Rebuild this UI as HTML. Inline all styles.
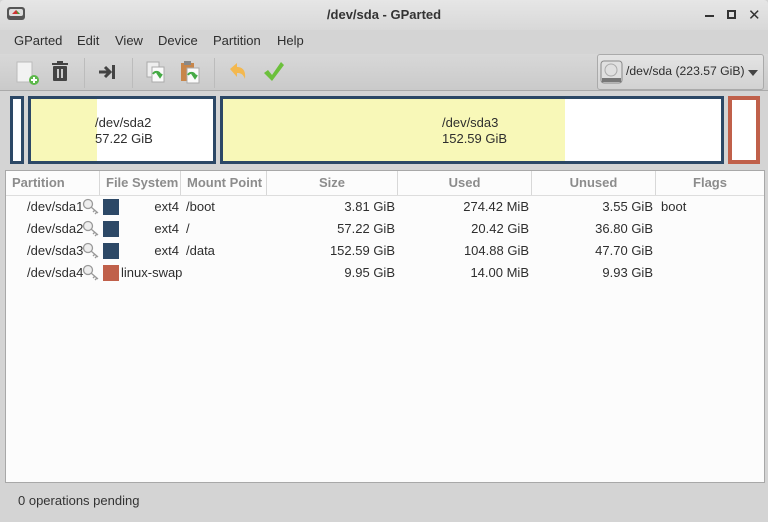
<!DOCTYPE html>
<html><head><meta charset="utf-8"><style>
*{margin:0;padding:0;box-sizing:border-box}
body{width:768px;height:522px;overflow:hidden;background:#d4d4d4;font-family:"Liberation Sans","DejaVu Sans",sans-serif;font-size:13px;color:#2e2e2e;position:relative}
.a{position:absolute;white-space:nowrap}
.r{text-align:right}
.t{line-height:22px;top:196px}
.hd{position:absolute;top:171px;height:24px;line-height:24px;color:#8c8c8c;font-weight:bold;border-right:1px solid #d8d8d8;padding-left:6px}
.sq{position:absolute;width:16px;height:16px;background:#2c4866}
</style></head><body>
<!-- title bar -->
<div class="a" style="left:0;top:0;width:768px;height:30px;background:linear-gradient(#e6e6e6,#d8d8d8);border-radius:4px 4px 0 0"></div>
<svg class="a" style="left:6px;top:5px" width="20" height="18" viewBox="0 0 20 18"><rect x="1" y="2" width="18" height="13" rx="3" fill="#555"/><rect x="3" y="4" width="14" height="7" rx="2" fill="#ddd"/><path d="M6 9 L10 5 L14 9Z" fill="#c33"/><path d="M10 5 L14 9 L12 9Z" fill="#3a3"/></svg>
<div class="a" style="left:0;width:768px;top:7px;text-align:center;font-weight:bold;font-size:13px;color:#333">/dev/sda - GParted</div>
<div class="a" style="left:705px;top:15px;width:9px;height:2px;background:#333"></div>
<div class="a" style="left:727px;top:10px;width:9px;height:9px;border:2px solid #333"></div>
<div class="a" style="left:748px;top:6px;font-weight:bold;font-size:15px;color:#333">✕</div>
<!-- menu -->
<div class="a" style="left:14px;top:33px">GParted</div>
<div class="a" style="left:77px;top:33px">Edit</div>
<div class="a" style="left:115px;top:33px">View</div>
<div class="a" style="left:158px;top:33px">Device</div>
<div class="a" style="left:213px;top:33px">Partition</div>
<div class="a" style="left:277px;top:33px">Help</div>
<!-- toolbar -->
<div class="a" style="left:0;top:54px;width:768px;height:37px;background:linear-gradient(#d8d8d8,#cacaca);border-bottom:1px solid #aaa"></div>
<div class="a" style="left:84px;top:58px;width:1px;height:30px;background:#bcbcbc"></div>
<div class="a" style="left:132px;top:58px;width:1px;height:30px;background:#bcbcbc"></div>
<div class="a" style="left:214px;top:58px;width:1px;height:30px;background:#bcbcbc"></div>
<svg class="a" style="left:14px;top:60px" width="26" height="26"><rect x="3" y="2" width="15" height="20" fill="#f2f2f2" stroke="#bbb"/><circle cx="20" cy="20" r="5" fill="#5cb84a"/><path d="M20 17v6M17 20h6" stroke="#fff" stroke-width="2"/></svg>
<svg class="a" style="left:50px;top:60px" width="22" height="24"><rect x="2" y="3" width="16" height="2" fill="#444"/><rect x="7" y="1" width="6" height="2" fill="#444"/><rect x="3" y="6" width="14" height="15" rx="1" fill="#444"/><path d="M8 9v9M12 9v9" stroke="#ccc" stroke-width="2"/></svg>
<svg class="a" style="left:97px;top:62px" width="22" height="20"><path d="M2 10h10M8 5l5 5-5 5" stroke="#444" stroke-width="3" fill="none"/><rect x="15" y="3" width="3" height="14" fill="#444"/></svg>
<svg class="a" style="left:144px;top:60px" width="24" height="26"><rect x="3" y="2" width="12" height="15" fill="#eee" stroke="#aaa"/><rect x="8" y="7" width="12" height="15" fill="#fafafa" stroke="#aaa"/><path d="M9 14a4 4 0 0 1 7 0l-2 0 2 3 2-3" stroke="#4a4" stroke-width="2" fill="none"/></svg>
<svg class="a" style="left:178px;top:60px" width="24" height="26"><rect x="3" y="3" width="13" height="18" fill="#c8864a"/><rect x="6" y="1" width="7" height="4" fill="#888"/><rect x="9" y="8" width="12" height="15" fill="#fafafa" stroke="#aaa"/><path d="M10 15a4 4 0 0 1 7 0l-2 0 2 3 2-3" stroke="#4a4" stroke-width="2" fill="none"/></svg>
<svg class="a" style="left:226px;top:60px" width="24" height="24"><path d="M4 9l7-6v4c6 0 9 4 8 12-2-5-4-6-8-6v4z" fill="#f3b84f"/></svg>
<svg class="a" style="left:261px;top:60px" width="24" height="24"><path d="M3 13l4-3 4 5 9-13 3 3-12 16z" fill="#6cc03c"/></svg>
<!-- device combo -->
<div class="a" style="left:597px;top:54px;width:167px;height:36px;border:1px solid #aaa;border-radius:3px;background:linear-gradient(#e4e4e4,#d2d2d2)"></div>
<svg class="a" style="left:600px;top:59px" width="24" height="26"><rect x="1" y="2" width="21" height="22" rx="3" fill="#e0e0e0" stroke="#888"/><circle cx="11" cy="11" r="6" fill="none" stroke="#aaa"/><rect x="2" y="19" width="19" height="4" fill="#777"/></svg>
<div class="a" style="left:626px;top:64px;font-size:12.2px">/dev/sda (223.57 GiB)</div>
<div class="a" style="left:748px;top:70px;width:0;height:0;border-left:5px solid transparent;border-right:5px solid transparent;border-top:6px solid #444"></div>
<!-- map -->
<div class="a" style="left:10px;top:96px;width:14px;height:68px;border:3px solid #2c4866;background:#fff"></div>
<div class="a" style="left:28px;top:96px;width:188px;height:68px;border:3px solid #2c4866;background:linear-gradient(90deg,#f8f8b8 0,#f8f8b8 66px,#fff 66px)"></div>
<div class="a" style="left:95px;top:115px;line-height:16px">/dev/sda2<br>57.22 GiB</div>
<div class="a" style="left:220px;top:96px;width:504px;height:68px;border:3px solid #2c4866;background:linear-gradient(90deg,#f8f8b8 0,#f8f8b8 342px,#fff 342px)"></div>
<div class="a" style="left:442px;top:115px;line-height:16px">/dev/sda3<br>152.59 GiB</div>
<div class="a" style="left:728px;top:96px;width:32px;height:68px;border:4px solid #c0604a;background:#fff"></div>
<!-- table -->
<div class="a" style="left:5px;top:170px;width:760px;height:313px;background:#fcfcfc;border:1px solid #a8a8a8"></div>
<div class="a" style="left:6px;top:195px;width:758px;height:1px;background:#ddd"></div>
<div class="hd" style="left:6px;width:94px">Partition</div>
<div class="hd" style="left:100px;width:81px">File System</div>
<div class="hd" style="left:181px;width:86px">Mount Point</div>
<div class="hd" style="left:267px;width:131px;text-align:center;padding:0">Size</div>
<div class="hd" style="left:398px;width:134px;text-align:center;padding:0">Used</div>
<div class="hd" style="left:532px;width:124px;text-align:center;padding:0">Unused</div>
<div class="hd" style="left:656px;width:108px;text-align:center;padding:0;border:0">Flags</div>

<div class="a t" style="left:27px">/dev/sda1<br>/dev/sda2<br>/dev/sda3<br>/dev/sda4</div>
<svg class="a" style="left:82px;top:198px" width="18" height="90"><g id="k" fill="none" stroke="#999" stroke-width="1.3"><circle cx="6" cy="6" r="4.5" fill="#eee"/><path d="M9 9l7 6M13 12l-2 2M15 14l-2 2"/></g><use href="#k" y="22"/><use href="#k" y="44"/><use href="#k" y="66"/></svg>
<div class="sq" style="left:103px;top:199px"></div>
<div class="sq" style="left:103px;top:221px"></div>
<div class="sq" style="left:103px;top:243px"></div>
<div class="sq" style="left:103px;top:265px;background:#c0604a"></div>
<div class="a r t" style="left:120px;width:59px">ext4<br>ext4<br>ext4</div>
<div class="a" style="left:121px;top:262px;line-height:22px">linux-swap</div>
<div class="a t" style="left:186px">/boot<br>/<br>/data</div>

<div class="a r t" style="left:270px;width:125px">3.81 GiB<br>57.22 GiB<br>152.59 GiB<br>9.95 GiB</div>
<div class="a r t" style="left:400px;width:129px">274.42 MiB<br>20.42 GiB<br>104.88 GiB<br>14.00 MiB</div>
<div class="a r t" style="left:534px;width:119px">3.55 GiB<br>36.80 GiB<br>47.70 GiB<br>9.93 GiB</div>
<div class="a t" style="left:661px">boot</div>

<div class="a" style="left:18px;top:493px;color:#333">0 operations pending</div>
</body></html>
